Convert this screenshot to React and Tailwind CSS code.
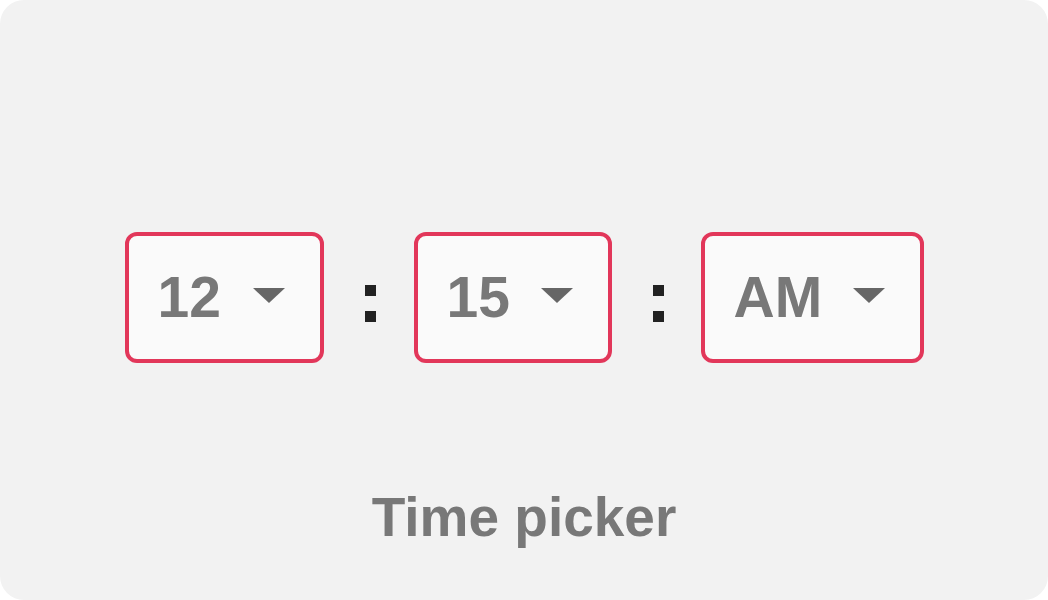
export default function App() {
  const Tri = () => (
    <svg width="32" height="15" viewBox="0 0 32 15" className="block">
      <polygon points="0,0 32,0 16,15" fill="#666666" />
    </svg>
  );
  const Box = ({ label, w }) => (
    <div
      className={`flex items-center justify-between h-[131px] border-[4px] border-[#e2375a] rounded-[12px] bg-[#fafafa] pl-[29px] pr-[35px] ${w}`}
    >
      <span className="text-[57px] leading-none font-bold text-[#787878]">{label}</span>
      <div className="mt-[-4px]">
        <Tri />
      </div>
    </div>
  );
  const Colon = () => (
    <div className="flex flex-col gap-[15px] mt-[12px]">
      <div className="w-[11px] h-[11px] bg-[#222222]" />
      <div className="w-[11px] h-[11px] bg-[#222222]" />
    </div>
  );
  return (
    <div className="w-[1048px] h-[600px] bg-white" style={{ fontFamily: '"Liberation Sans", Arial, sans-serif' }}>
      <div className="w-[1048px] h-[600px] rounded-[24px] bg-[#f2f2f2] flex flex-col items-center pt-[232px]">
        <div className="flex items-center">
          <Box label="12" w="w-[199px]" />
          <div className="ml-[41px] mr-[38px]">
            <Colon />
          </div>
          <Box label="15" w="w-[198px]" />
          <div className="ml-[41px] mr-[37px]">
            <Colon />
          </div>
          <Box label="AM" w="w-[223px]" />
        </div>
        <div className="mt-[127px] text-[55px] leading-none font-bold text-[#787878]">Time picker</div>
      </div>
    </div>
  );
}
